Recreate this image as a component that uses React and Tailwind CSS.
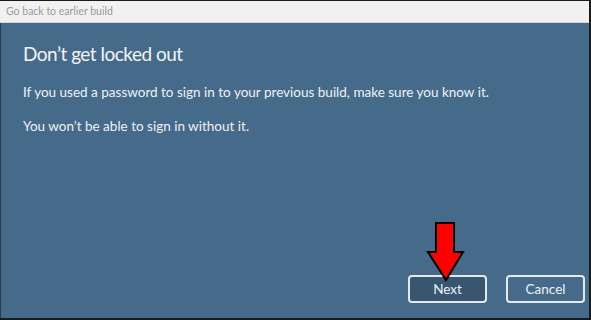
import React from 'react'

function Arrow() {
  return (
    <svg className="absolute left-[426px] top-[221px]" width="40" height="62" viewBox="0 0 40 62">
      <path d="M10 2 H28 V31 H37 L20 59 L2 31 H10 Z" fill="#ff0000" stroke="#000" strokeWidth="2" strokeLinejoin="miter" />
    </svg>
  )
}

export default function App() {
  return (
    <div className="relative w-[591px] h-[320px] bg-[#1b1b1b] pt-px pr-[2px] pb-[2px] flex flex-col" style={{ fontFamily: 'Lato, "Open Sans", sans-serif' }}>
      <div className="h-[22px] bg-[#f1f1f1] border-b border-[#d8d8d8] flex items-center pl-[6px]">
        <span className="text-[10.5px] text-[#9a9a9a]">Go back to earlier build</span>
      </div>
      <div className="flex-1 bg-[#466a8a] border-l border-[#2a3a48] flex flex-col pl-[22px] pr-[4px]">
        <h1 className="text-[19px] text-[#f2f5f8] mt-[16px] leading-[30px] tracking-[-0.5px]">Don’t get locked out</h1>
        <p className="text-[13.5px] text-[#eef2f5] mt-[14px] leading-[18px]">If you used a password to sign in to your previous build, make sure you know it.</p>
        <p className="text-[13.5px] text-[#eef2f5] mt-[16px] leading-[18px]">You won’t be able to sign in without it.</p>
        <div className="mt-auto mb-[15px] flex justify-end gap-[19px]">
          <button className="w-[79px] h-[28px] rounded-[4px] border-2 border-[#e6e9ec] bg-[#385670] text-[13.5px] text-[#eef2f5]">Next</button>
          <button className="w-[79px] h-[28px] rounded-[4px] border-2 border-[#e6e9ec] bg-transparent text-[13.5px] text-[#eef2f5]">Cancel</button>
        </div>
      </div>
      <Arrow />
    </div>
  )
}
